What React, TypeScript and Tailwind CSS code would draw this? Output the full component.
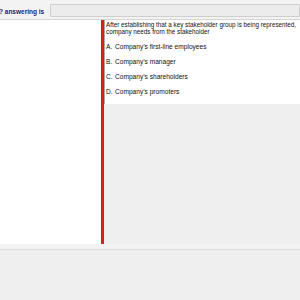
export default function App() {
  const options = [
    { key: 'A', text: "Company\u2019s first-line employees" },
    { key: 'B', text: "Company\u2019s manager" },
    { key: 'C', text: "Company\u2019s shareholders" },
    { key: 'D', text: "Company\u2019s promoters" },
  ];

  return (
    <div className="w-[300px] h-[300px] overflow-hidden bg-[#efefef] flex flex-col font-['Liberation_Sans',Arial,sans-serif] text-black">
      {/* top bar */}
      <div className="h-[20px] flex items-center bg-[#f3f3f3] border-b border-[#d4d4d4] shrink-0">
        <span className="text-[6.5px] font-bold text-[#1c1c7c] whitespace-nowrap -ml-[1px] w-[51px] mt-[5px]">? answering is</span>
        <div className="flex-1 h-[13px] mt-[1px] bg-[#ececec] border border-[#cfcfcf] rounded-[1px]"></div>
      </div>

      {/* main area */}
      <div className="h-[224px] flex shrink-0">
        <div className="w-[101px] bg-white"></div>
        <div className="w-[3px] bg-[#d0211d]"></div>
        <div className="flex-1 flex flex-col overflow-hidden">
          <div className="h-[84px] bg-white flex border-l border-[#a8a8a8]">
            <div className="pl-[1px] pt-[1px] text-[6.6px] leading-[7px] whitespace-nowrap text-[#111]">
              <p className="text-[6.3px]">After establishing that a key stakeholder group is being represented,</p>
              <p className="text-[6.3px]">company needs from the stakeholder</p>
              <div className="mt-[8px] flex flex-col gap-[8px]">
                {options.map((o) => (
                  <p key={o.key} className="flex">
                    <span className="w-[9px]">{o.key}.</span>
                    <span>{o.text}</span>
                  </p>
                ))}
              </div>
            </div>
          </div>
          <div className="flex-1 bg-[#efefef]"></div>
        </div>
      </div>

      {/* bottom */}
      <div className="h-[6px] bg-[#f3f3f3] border-b border-[#dcdcdc] shrink-0"></div>
      <div className="flex-1 bg-[#efefef]"></div>
    </div>
  );
}
